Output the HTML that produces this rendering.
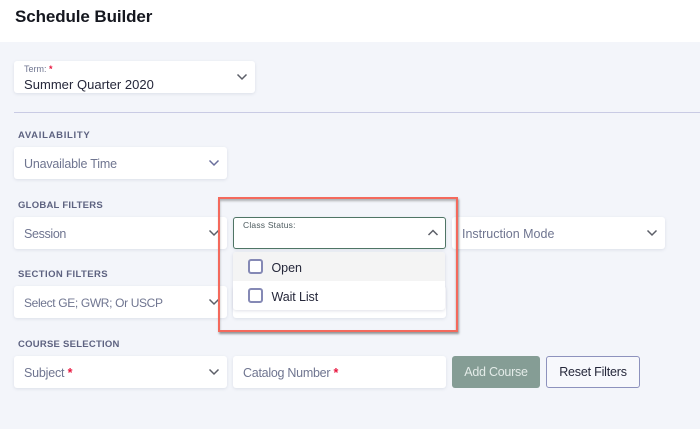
<!DOCTYPE html>
<html lang="en">
<head>
<meta charset="utf-8">
<title>Schedule Builder</title>
<style>
html,body{margin:0;padding:0}
body{width:700px;height:429px;overflow:hidden;position:relative;background:#f3f5fa;font-family:"Liberation Sans",sans-serif;color:#6f7590}
.hd{position:absolute;left:0;top:0;width:700px;height:41.5px;background:#fff}
.a{position:absolute;white-space:nowrap}
.title{left:15px;top:6px;font-size:17px;line-height:22px;font-weight:bold;color:#15171f;letter-spacing:-.1px}
.box{position:absolute;background:#fff;border-radius:3px;box-shadow:0 1px 3px rgba(60,70,110,.12);height:32px;box-sizing:border-box}
.t{position:absolute;left:10px;top:1px;line-height:33px;font-size:12.5px;color:#6f7590;white-space:nowrap}
.lab{font-size:9.5px;line-height:12px;font-weight:bold;color:#5d6280}
.star{color:#e8173f;font-weight:bold}
svg.c{position:absolute;width:12px;height:8px}
.line{left:14px;top:112px;width:686px;height:1px;background:#c9cbe4}
.menu{position:absolute;left:233px;top:252px;width:212px;height:58px;background:#fff;border-radius:3px;box-shadow:0 1px 3px rgba(60,70,110,.16)}
.row{position:absolute;left:0;width:212px;height:29px}
.cb{position:absolute;left:15px;top:7px;width:14.5px;height:14.5px;box-sizing:border-box;border:2px solid #8589b5;border-radius:3px;background:#fff}
.rt{position:absolute;left:38.5px;top:1px;line-height:30px;font-size:12.5px;color:#25273a;white-space:nowrap}
.red{position:absolute;left:218px;top:197px;width:240px;height:135px;box-sizing:border-box;border:2px solid #f4695c;box-shadow:1px 2px 2px rgba(70,70,70,.55),inset 0 2px 2px rgba(70,70,70,.4)}
.btn{position:absolute;top:356px;height:32px;box-sizing:border-box;border-radius:3px;font-size:12.5px;line-height:33px;text-align:center}
</style>
</head>
<body>
<div class="hd"></div>
<div class="a title">Schedule Builder</div>

<div class="box" style="left:14px;top:61px;width:241px">
  <div class="a" style="left:10px;top:3px;font-size:9px;line-height:10px;color:#6f7590">Term: <span class="star">*</span></div>
  <div class="a" style="left:10px;top:15px;font-size:13px;line-height:17px;color:#25273a;letter-spacing:.03px">Summer Quarter 2020</div>
  <svg class="c" style="left:222px;top:12px" viewBox="0 0 12 8"><path d="M1.5 1.5l4.5 4.5 4.5-4.5" fill="none" stroke="#5c5f68" stroke-width="1.5"/></svg>
</div>

<div class="a line"></div>

<div class="a lab" style="left:18px;top:130px;letter-spacing:.7px">AVAILABILITY</div>
<div class="box" style="left:14px;top:147px;width:213px">
  <div class="t" style="letter-spacing:-.19px">Unavailable Time</div>
  <svg class="c" style="left:194px;top:12px" viewBox="0 0 12 8"><path d="M1.5 1.5l4.5 4.5 4.5-4.5" fill="none" stroke="#6a6f9c" stroke-width="1.5"/></svg>
</div>

<div class="a lab" style="left:18px;top:200px;letter-spacing:.25px">GLOBAL FILTERS</div>
<div class="box" style="left:14px;top:217px;width:213px">
  <div class="t" style="letter-spacing:-.35px">Session</div>
  <svg class="c" style="left:194px;top:12px" viewBox="0 0 12 8"><path d="M1.5 1.5l4.5 4.5 4.5-4.5" fill="none" stroke="#5c5f68" stroke-width="1.5"/></svg>
</div>
<div class="box" style="left:233px;top:217px;width:213px;border:1px solid #4f7565">
  <div class="a" style="left:9px;top:2px;font-size:8.5px;line-height:11px;color:#4c5a5e;letter-spacing:.2px">Class Status:</div>
  <svg class="c" style="left:193px;top:11px" viewBox="0 0 12 8"><path d="M1.5 6l4.5-4.5 4.5 4.5" fill="none" stroke="#5c5f68" stroke-width="1.5"/></svg>
</div>
<div class="box" style="left:452px;top:217px;width:213px">
  <div class="t">Instruction Mode</div>
  <svg class="c" style="left:194px;top:12px" viewBox="0 0 12 8"><path d="M1.5 1.5l4.5 4.5 4.5-4.5" fill="none" stroke="#5c5f68" stroke-width="1.5"/></svg>
</div>

<div class="a lab" style="left:18px;top:269px;letter-spacing:.42px">SECTION FILTERS</div>
<div class="box" style="left:14px;top:286px;width:213px">
  <div class="t" style="font-size:12px;letter-spacing:-.35px">Select GE; GWR; Or USCP</div>
  <svg class="c" style="left:194px;top:12px" viewBox="0 0 12 8"><path d="M1.5 1.5l4.5 4.5 4.5-4.5" fill="none" stroke="#5c5f68" stroke-width="1.5"/></svg>
</div>
<div class="box" style="left:233px;top:286px;width:213px"></div>

<div class="menu">
  <div class="row" style="top:0;background:#f4f4f4;border-radius:3px 3px 0 0"><div class="cb"></div><div class="rt" style="letter-spacing:-.05px">Open</div></div>
  <div class="row" style="top:29px"><div class="cb"></div><div class="rt" style="letter-spacing:-.1px">Wait List</div></div>
</div>

<div class="a lab" style="left:18px;top:339px;letter-spacing:.25px">COURSE SELECTION</div>
<div class="box" style="left:14px;top:356px;width:213px">
  <div class="t" style="letter-spacing:-.2px">Subject <span class="star">*</span></div>
  <svg class="c" style="left:194px;top:12px" viewBox="0 0 12 8"><path d="M1.5 1.5l4.5 4.5 4.5-4.5" fill="none" stroke="#5c5f68" stroke-width="1.5"/></svg>
</div>
<div class="box" style="left:233px;top:356px;width:213px">
  <div class="t" style="letter-spacing:-.27px">Catalog Number <span class="star">*</span></div>
</div>
<div class="btn" style="left:452px;width:88px;background:#859d95;color:#e3ebe8;letter-spacing:-.25px">Add Course</div>
<div class="btn" style="left:546px;width:94px;background:#f7f8fc;border:1px solid #8d92bd;color:#25273a;line-height:31px;letter-spacing:-.2px">Reset Filters</div>

<div class="red"></div>
</body>
</html>
